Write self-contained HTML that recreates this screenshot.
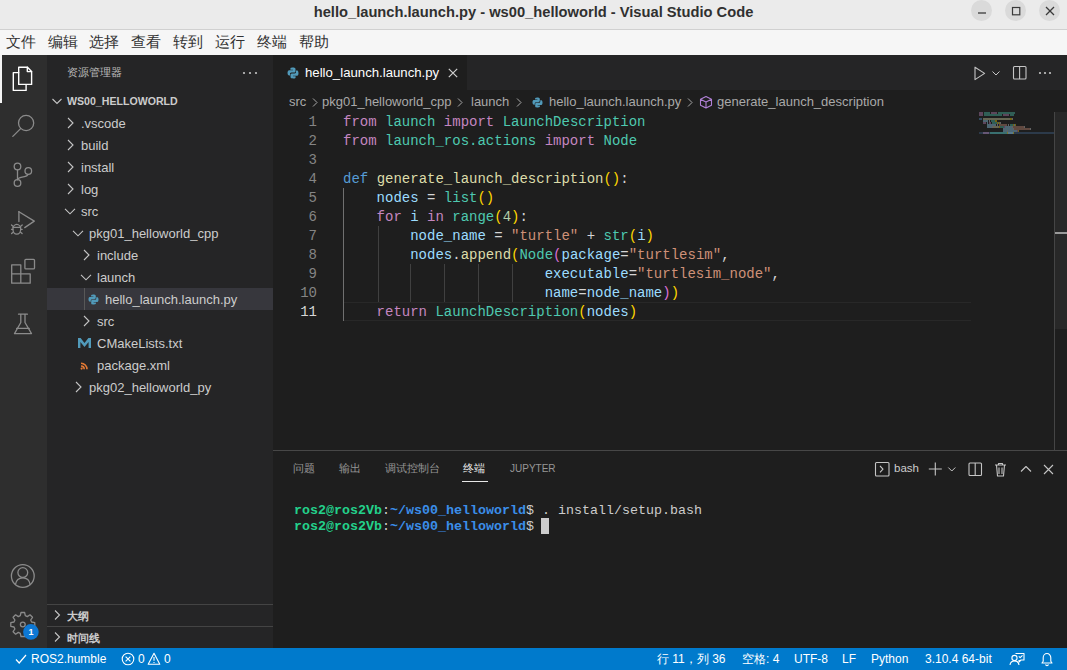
<!DOCTYPE html>
<html><head><meta charset="utf-8">
<style>
*{margin:0;padding:0;box-sizing:border-box}
html,body{width:1067px;height:670px;overflow:hidden;background:#1e1e1e;font-family:"Liberation Sans",sans-serif}
div,span,svg{position:absolute}
svg{overflow:visible}
#title{left:0;top:0;width:1067px;height:30px;background:#ebebeb;border-bottom:1px solid #d0d0d0}
#title .t{left:0;top:0;width:1067px;text-align:center;font-weight:bold;font-size:14.7px;line-height:25px;color:#303030}
.wbtn{width:21px;height:21px;border-radius:11px;background:#dadada;top:0}
#menu{left:0;top:30px;width:1067px;height:25px;background:#f6f6f6}
#menu span{top:0;font-size:14.5px;line-height:25px;color:#333}
#act{left:0;top:55px;width:47px;height:593px;background:#2e2e2e}
#side{left:47px;top:55px;width:226px;height:593px;background:#252526}
#tabs{left:273px;top:55px;width:794px;height:35px;background:#252526}
#editor{left:273px;top:90px;width:794px;height:360px;background:#1e1e1e}
#panel{left:273px;top:450px;width:794px;height:198px;background:#1e1e1e;border-top:1px solid #474747}
#status{left:0;top:648px;width:1067px;height:22px;background:#007acc;color:#fff;font-size:12px}
#status span{top:0;line-height:22px;white-space:nowrap}
.row{left:0;width:226px;height:22px;line-height:22px;font-size:13px;color:#cccccc;white-space:nowrap}
.row span{top:1px}
.code{left:343px;width:630px;height:19px;padding-top:1px;font-family:"Liberation Mono",monospace;font-size:14px;line-height:19px;white-space:pre;color:#d4d4d4}
.ln{left:273px;width:44px;height:19px;padding-top:1px;text-align:right;font-family:"Liberation Mono",monospace;font-size:14px;line-height:19px;color:#858585}
.k{color:#c586c0}.f{color:#dcdcaa}.c{color:#4ec9b0}.v{color:#9cdcfe}.s{color:#ce9178}.n{color:#b5cea8}.d{color:#569cd6}.y{color:#ffd700}.p{color:#da70d6}.b{color:#179fff}
.code span{position:static}
.guide{width:1px;background:#404040}
.term{left:294px;height:16px;padding-top:1px;font-family:"Liberation Mono",monospace;font-size:13.33px;line-height:16px;white-space:pre;color:#cccccc}
.term span{position:static}
.tg{color:#23d18b;font-weight:bold}.tb{color:#3b8eea;font-weight:bold}
.ptab{top:0;font-size:11px;line-height:35px;color:#969696;white-space:nowrap}
</style></head><body>
<!-- title bar -->
<div id="title"><div class="t">hello_launch.launch.py - ws00_helloworld - Visual Studio Code</div>
<div class="wbtn" style="left:971px"></div>
<div class="wbtn" style="left:1005px"></div>
<div class="wbtn" style="left:1039px"></div>
<svg style="left:0;top:0" width="1067" height="30"><g stroke="#3a3a3a" stroke-width="1" fill="none">
<line x1="978" y1="13" x2="986" y2="13" stroke-width="1.3"/>
<rect x="1012.5" y="7.5" width="7.3" height="7.3" stroke-width="1.2"/>
<line x1="1046" y1="7" x2="1054" y2="15" stroke-width="1.2"/><line x1="1054" y1="7" x2="1046" y2="15" stroke-width="1.2"/>
</g></svg>
</div>
<!-- menu -->
<div id="menu">
<span style="left:6px">文件</span><span style="left:48px">编辑</span><span style="left:89px">选择</span><span style="left:131px">查看</span><span style="left:173px">转到</span><span style="left:215px">运行</span><span style="left:257px">终端</span><span style="left:299px">帮助</span>
</div>
<!-- activity bar -->
<div id="act">
<div style="left:0;top:0;width:1.5px;height:48px;background:#f4f4f4"></div>
<svg style="left:0;top:0" width="47" height="593" fill="none" stroke-linecap="round" stroke-linejoin="round">
<!-- explorer -->
<g stroke="#ffffff" stroke-width="1.4">
<path d="M18.7 18.3V12.3H27.5L31.6 16.4V29.4H18.7V18.3"/>
<path d="M27.3 12.3V16.6H31.6"/>
<path d="M18.7 17.6H13.3V35.4H26.1V29.6"/>
</g>
<g stroke="#8b8b8b" stroke-width="1.3">
<!-- search -->
<circle cx="26.1" cy="68" r="7.6"/>
<line x1="20.6" y1="73.6" x2="12.8" y2="81.4"/>
<!-- scm -->
<circle cx="17.5" cy="111.5" r="3.3"/>
<circle cx="17.5" cy="128" r="3.3"/>
<circle cx="28.3" cy="116" r="3.3"/>
<path d="M17.5 114.8V124.7"/>
<path d="M28 119.3C28 123 18.5 120.5 17.5 124.7"/>
<!-- debug -->
<path d="M18.9 156.7V166.5"/>
<path d="M18.9 156.7L34.3 166.1L24.7 172.6"/>
<ellipse cx="16.8" cy="174.3" rx="3.9" ry="4.9"/>
<path d="M12.9 172.3H20.7M11.5 170L13 171.3M22.2 170L20.7 171.3M11.5 174.3H12.9M20.7 174.3H22.2M11.6 178.6L13.1 177.3M22.1 178.6L20.6 177.3"/>
<!-- extensions -->
<path d="M11.7 209.8H20.8V218.9H11.7Z M11.7 218.9H20.8V228.2H11.7Z M20.8 218.9H30.2V228.2H20.8Z"/>
<rect x="24.9" y="204.3" width="9.6" height="9.6" rx="1"/>
<!-- testing -->
<path d="M18.5 259.2H27.4M20.8 259.2V267.5L14.5 278.6H31.5L25 267.5V259.2"/>
<path d="M16.6 273.4H29.2"/>
<!-- accounts -->
<circle cx="22.8" cy="521" r="11.4"/>
<circle cx="22.8" cy="517.6" r="4.9"/>
<path d="M15.4 529.7C16.2 525 19.5 522.9 22.8 522.9C26.1 522.9 29.4 525 30.2 529.7"/>
<!-- gear -->
<path d="M21 557.5H24.6L25.3 560.7L27.3 561.6L30 559.8L32.5 562.3L30.7 565L31.6 567L34.8 567.7V571.3L31.6 572L30.7 574L32.5 576.7L30 579.2L27.3 577.4L25.3 578.3L24.6 581.5H21L20.3 578.3L18.3 577.4L15.6 579.2L13.1 576.7L14.9 574L14 572L10.8 571.3V567.7L14 567L14.9 565L13.1 562.3L15.6 559.8L18.3 561.6L20.3 560.7Z"/>
<circle cx="22.8" cy="569.5" r="2.4"/>
</g>
<circle cx="30.9" cy="576.9" r="7.8" fill="#0e78d4"/>
<text x="30.9" y="580.3" fill="#fff" font-size="9" font-weight="bold" text-anchor="middle" font-family="Liberation Sans" stroke="none">1</text>
</svg>
</div>
<!-- sidebar -->
<div id="side">
<span style="left:20px;top:0;line-height:35px;font-size:11px;color:#bbbbbb">资源管理器</span>
<svg style="left:195px;top:16px" width="16" height="4"><g fill="#c5c5c5"><circle cx="2" cy="2" r="1.1"/><circle cx="8" cy="2" r="1.1"/><circle cx="14" cy="2" r="1.1"/></g></svg>
<div class="row" style="top:35px;font-weight:bold;font-size:10.6px">
<svg style="left:2px;top:3px" width="16" height="16" fill="none" stroke="#c5c5c5" stroke-width="1.1"><path d="M3.5 6L8 10.5L12.5 6"/></svg>
<span style="left:20px;top:0">WS00_HELLOWORLD</span></div>
<div style="left:0;top:233px;width:226px;height:22px;background:#37373d"></div>
<div style="left:37px;top:233px;width:1px;height:22px;background:#585858"></div>
<div id="tree">
<div class="row" style="top:57px"><svg style="left:15px;top:3px" width="16" height="16" fill="none" stroke="#c5c5c5" stroke-width="1.1"><path d="M6 3L11 8L6 13"/></svg><span style="left:34px">.vscode</span></div>
<div class="row" style="top:79px"><svg style="left:15px;top:3px" width="16" height="16" fill="none" stroke="#c5c5c5" stroke-width="1.1"><path d="M6 3L11 8L6 13"/></svg><span style="left:34px">build</span></div>
<div class="row" style="top:101px"><svg style="left:15px;top:3px" width="16" height="16" fill="none" stroke="#c5c5c5" stroke-width="1.1"><path d="M6 3L11 8L6 13"/></svg><span style="left:34px">install</span></div>
<div class="row" style="top:123px"><svg style="left:15px;top:3px" width="16" height="16" fill="none" stroke="#c5c5c5" stroke-width="1.1"><path d="M6 3L11 8L6 13"/></svg><span style="left:34px">log</span></div>
<div class="row" style="top:145px"><svg style="left:15px;top:3px" width="16" height="16" fill="none" stroke="#c5c5c5" stroke-width="1.1"><path d="M3 5.8L8 10.8L13 5.8"/></svg><span style="left:34px">src</span></div>
<div class="row" style="top:167px"><svg style="left:23px;top:3px" width="16" height="16" fill="none" stroke="#c5c5c5" stroke-width="1.1"><path d="M3 5.8L8 10.8L13 5.8"/></svg><span style="left:42px">pkg01_helloworld_cpp</span></div>
<div class="row" style="top:189px"><svg style="left:31px;top:3px" width="16" height="16" fill="none" stroke="#c5c5c5" stroke-width="1.1"><path d="M6 3L11 8L6 13"/></svg><span style="left:50px">include</span></div>
<div class="row" style="top:211px"><svg style="left:31px;top:3px" width="16" height="16" fill="none" stroke="#c5c5c5" stroke-width="1.1"><path d="M3 5.8L8 10.8L13 5.8"/></svg><span style="left:50px">launch</span></div>
<div class="row" style="top:233px"><svg style="left:41px;top:6px" width="11" height="11" viewBox="0 0 12 12"><path d="M5.8 0.5C3.2 0.5 3.4 1.6 3.4 1.6V2.8H5.9V3.2H2.3C2.3 3.2 0.5 3 0.5 5.8C0.5 8.5 2 8.4 2 8.4H3V7.1C3 7.1 2.9 5.6 4.5 5.6H7C7 5.6 8.5 5.6 8.5 4.2V1.9C8.5 1.9 8.7 0.5 5.8 0.5Z" fill="#519aba"/><path d="M6.2 11.5C8.8 11.5 8.6 10.4 8.6 10.4V9.2H6.1V8.8H9.7C9.7 8.8 11.5 9 11.5 6.2C11.5 3.5 10 3.6 10 3.6H9V4.9C9 4.9 9.1 6.4 7.5 6.4H5C5 6.4 3.5 6.4 3.5 7.8V10.1C3.5 10.1 3.3 11.5 6.2 11.5Z" fill="#519aba"/></svg><span style="left:58px">hello_launch.launch.py</span></div>
<div class="row" style="top:255px"><svg style="left:31px;top:3px" width="16" height="16" fill="none" stroke="#c5c5c5" stroke-width="1.1"><path d="M6 3L11 8L6 13"/></svg><span style="left:50px">src</span></div>
<div class="row" style="top:277px"><svg style="left:31px;top:6px" width="13" height="10"><path d="M0 10V0H2.6L6.5 5L10.4 0H13V10H10.6V4L6.5 9L2.4 4V10Z" fill="#519aba"/></svg><span style="left:50px">CMakeLists.txt</span></div>
<div class="row" style="top:299px"><svg style="left:33px;top:7px" width="9" height="9" fill="none" stroke="#e37933" stroke-width="1.6"><path d="M1 2.2A6 6 0 0 1 7 8.2M1 5A3.2 3.2 0 0 1 4.2 8.2"/><circle cx="1.6" cy="7.6" r="1.1" fill="#e37933" stroke="none"/></svg><span style="left:50px">package.xml</span></div>
<div class="row" style="top:321px"><svg style="left:23px;top:3px" width="16" height="16" fill="none" stroke="#c5c5c5" stroke-width="1.1"><path d="M6 3L11 8L6 13"/></svg><span style="left:42px">pkg02_helloworld_py</span></div>
</div>
<div style="left:0;top:549px;width:226px;height:1px;background:#444"></div>
<div style="left:0;top:571px;width:226px;height:1px;background:#444"></div>
<div class="row" style="top:549px;font-weight:bold;font-size:11px">
<svg style="left:2px;top:3px" width="16" height="16" fill="none" stroke="#c5c5c5" stroke-width="1.1"><path d="M6 3.5L10.5 8L6 12.5"/></svg>
<span style="left:20px">大纲</span></div>
<div class="row" style="top:571px;font-weight:bold;font-size:11px">
<svg style="left:2px;top:3px" width="16" height="16" fill="none" stroke="#c5c5c5" stroke-width="1.1"><path d="M6 3.5L10.5 8L6 12.5"/></svg>
<span style="left:20px">时间线</span></div>
</div>
<!-- tabs -->
<div id="tabs">
<div style="left:0;top:0;width:194px;height:35px;background:#1e1e1e"></div>
<svg style="left:14px;top:11.5px" width="12" height="12" viewBox="0 0 12 12"><path d="M5.8 0.5C3.2 0.5 3.4 1.6 3.4 1.6V2.8H5.9V3.2H2.3C2.3 3.2 0.5 3 0.5 5.8C0.5 8.5 2 8.4 2 8.4H3V7.1C3 7.1 2.9 5.6 4.5 5.6H7C7 5.6 8.5 5.6 8.5 4.2V1.9C8.5 1.9 8.7 0.5 5.8 0.5Z" fill="#519aba"/><path d="M6.2 11.5C8.8 11.5 8.6 10.4 8.6 10.4V9.2H6.1V8.8H9.7C9.7 8.8 11.5 9 11.5 6.2C11.5 3.5 10 3.6 10 3.6H9V4.9C9 4.9 9.1 6.4 7.5 6.4H5C5 6.4 3.5 6.4 3.5 7.8V10.1C3.5 10.1 3.3 11.5 6.2 11.5Z" fill="#519aba"/></svg>
<span style="left:32px;top:-0.5px;line-height:35px;font-size:13.2px;color:#ffffff;white-space:nowrap">hello_launch.launch.py</span>
<svg style="left:175px;top:13px" width="10" height="10" fill="none" stroke="#d0d0d0" stroke-width="1.2"><path d="M0.8 0.8L9.2 9.2M9.2 0.8L0.8 9.2"/></svg>
<svg style="left:700px;top:10px" width="90" height="16" fill="none" stroke="#c5c5c5" stroke-width="1.1" stroke-linejoin="round">
<path d="M2 2.2V14.6L11.6 8.4Z"/>
<path d="M19.5 6.5L23 10L26.5 6.5" stroke-width="1"/>
<rect x="40.5" y="1.5" width="12.5" height="12.5" rx="1"/>
<path d="M46.6 1.5V14"/>
<g fill="#c5c5c5" stroke="none"><circle cx="67" cy="8" r="1.1"/><circle cx="72" cy="8" r="1.1"/><circle cx="77" cy="8" r="1.1"/></g>
</svg>
</div>
<!-- editor -->
<div id="editor">
<div style="left:0;top:1px;width:794px;height:22px;font-size:13px;color:#a9a9a9;white-space:nowrap;line-height:22px" id="bc"><span style="left:16px;top:0">src</span><svg style="left:35px;top:4px" width="14" height="14" fill="none" stroke="#a9a9a9" stroke-width="1"><path d="M5 3.5L9 7.5L5 11.5"/></svg><span style="left:49px;top:0">pkg01_helloworld_cpp</span><svg style="left:180px;top:4px" width="14" height="14" fill="none" stroke="#a9a9a9" stroke-width="1"><path d="M5 3.5L9 7.5L5 11.5"/></svg><span style="left:198px;top:0">launch</span><svg style="left:239px;top:4px" width="14" height="14" fill="none" stroke="#a9a9a9" stroke-width="1"><path d="M5 3.5L9 7.5L5 11.5"/></svg><svg style="left:259px;top:6px" width="11" height="11" viewBox="0 0 12 12"><path d="M5.8 0.5C3.2 0.5 3.4 1.6 3.4 1.6V2.8H5.9V3.2H2.3C2.3 3.2 0.5 3 0.5 5.8C0.5 8.5 2 8.4 2 8.4H3V7.1C3 7.1 2.9 5.6 4.5 5.6H7C7 5.6 8.5 5.6 8.5 4.2V1.9C8.5 1.9 8.7 0.5 5.8 0.5Z" fill="#519aba"/><path d="M6.2 11.5C8.8 11.5 8.6 10.4 8.6 10.4V9.2H6.1V8.8H9.7C9.7 8.8 11.5 9 11.5 6.2C11.5 3.5 10 3.6 10 3.6H9V4.9C9 4.9 9.1 6.4 7.5 6.4H5C5 6.4 3.5 6.4 3.5 7.8V10.1C3.5 10.1 3.3 11.5 6.2 11.5Z" fill="#519aba"/></svg><span style="left:276px;top:0">hello_launch.launch.py</span><svg style="left:410px;top:4px" width="14" height="14" fill="none" stroke="#a9a9a9" stroke-width="1"><path d="M5 3.5L9 7.5L5 11.5"/></svg><svg style="left:426px;top:4px" width="14" height="14" fill="none" stroke="#b180d7" stroke-width="1.1" stroke-linejoin="round"><path d="M7 1.5L12.5 4.3V10.2L7 13L1.5 10.2V4.3Z M1.5 4.3L7 7.1L12.5 4.3 M7 7.1V13"/></svg><span style="left:444px;top:0">generate_launch_description</span></div>
</div>
<div id="code">
<div style="left:343px;top:302px;width:628px;height:19px;border:1px solid #282828;border-right:none"></div>
<div class="ln" style="top:112px;color:#858585">1</div>
<div class="code" style="top:112px"><span class="k">from</span> <span class="c">launch</span> <span class="k">import</span> <span class="c">LaunchDescription</span></div>
<div class="ln" style="top:131px;color:#858585">2</div>
<div class="code" style="top:131px"><span class="k">from</span> <span class="c">launch_ros.actions</span> <span class="k">import</span> <span class="c">Node</span></div>
<div class="ln" style="top:150px;color:#858585">3</div>
<div class="code" style="top:150px"></div>
<div class="ln" style="top:169px;color:#858585">4</div>
<div class="code" style="top:169px"><span class="d">def</span> <span class="f">generate_launch_description</span><span class="y">()</span>:</div>
<div class="ln" style="top:188px;color:#858585">5</div>
<div class="code" style="top:188px">    <span class="v">nodes</span> = <span class="c">list</span><span class="y">()</span></div>
<div class="ln" style="top:207px;color:#858585">6</div>
<div class="code" style="top:207px">    <span class="k">for</span> <span class="v">i</span> <span class="k">in</span> <span class="c">range</span><span class="y">(</span><span class="n">4</span><span class="y">)</span>:</div>
<div class="ln" style="top:226px;color:#858585">7</div>
<div class="code" style="top:226px">        <span class="v">node_name</span> = <span class="s">"turtle"</span> + <span class="c">str</span><span class="y">(</span><span class="v">i</span><span class="y">)</span></div>
<div class="ln" style="top:245px;color:#858585">8</div>
<div class="code" style="top:245px">        <span class="v">nodes</span>.<span class="f">append</span><span class="y">(</span><span class="c">Node</span><span class="p">(</span><span class="v">package</span>=<span class="s">"turtlesim"</span>,</div>
<div class="ln" style="top:264px;color:#858585">9</div>
<div class="code" style="top:264px">                        <span class="v">executable</span>=<span class="s">"turtlesim_node"</span>,</div>
<div class="ln" style="top:283px;color:#858585">10</div>
<div class="code" style="top:283px">                        <span class="v">name</span>=<span class="v">node_name</span><span class="p">)</span><span class="y">)</span></div>
<div class="ln" style="top:302px;color:#d6d6d6">11</div>
<div class="code" style="top:302px">    <span class="k">return</span> <span class="c">LaunchDescription</span><span class="y">(</span><span class="v">nodes</span><span class="y">)</span></div>
<div class="guide" style="left:343px;top:188px;height:133px;background:#707070"></div>
<div class="guide" style="left:378px;top:226px;height:76px"></div>
<div class="guide" style="left:410px;top:264px;height:38px"></div>
<div class="guide" style="left:444px;top:264px;height:38px"></div>
<div class="guide" style="left:478px;top:264px;height:38px"></div>
<div class="guide" style="left:512px;top:264px;height:38px"></div>
</div>
<div id="minimap">
<div style="left:979px;top:132px;width:75px;height:2px;background:#2c3a4a"></div>
<div style="left:979px;top:112px;width:4px;height:2px;background:#c586c0;opacity:.38"></div>
<div style="left:984px;top:112px;width:6px;height:2px;background:#4ec9b0;opacity:.38"></div>
<div style="left:991px;top:112px;width:6px;height:2px;background:#c586c0;opacity:.38"></div>
<div style="left:998px;top:112px;width:17px;height:2px;background:#4ec9b0;opacity:.38"></div>
<div style="left:979px;top:114px;width:4px;height:2px;background:#c586c0;opacity:.38"></div>
<div style="left:984px;top:114px;width:18px;height:2px;background:#4ec9b0;opacity:.38"></div>
<div style="left:1003px;top:114px;width:6px;height:2px;background:#c586c0;opacity:.38"></div>
<div style="left:1010px;top:114px;width:4px;height:2px;background:#4ec9b0;opacity:.38"></div>
<div style="left:979px;top:118px;width:3px;height:2px;background:#569cd6;opacity:.38"></div>
<div style="left:983px;top:118px;width:27px;height:2px;background:#dcdcaa;opacity:.38"></div>
<div style="left:1010px;top:118px;width:2px;height:2px;background:#ffd700;opacity:.38"></div>
<div style="left:1012px;top:118px;width:1px;height:2px;background:#d4d4d4;opacity:.38"></div>
<div style="left:983px;top:120px;width:5px;height:2px;background:#9cdcfe;opacity:.38"></div>
<div style="left:989px;top:120px;width:1px;height:2px;background:#d4d4d4;opacity:.38"></div>
<div style="left:991px;top:120px;width:4px;height:2px;background:#4ec9b0;opacity:.38"></div>
<div style="left:995px;top:120px;width:2px;height:2px;background:#ffd700;opacity:.38"></div>
<div style="left:983px;top:122px;width:3px;height:2px;background:#c586c0;opacity:.38"></div>
<div style="left:987px;top:122px;width:1px;height:2px;background:#9cdcfe;opacity:.38"></div>
<div style="left:989px;top:122px;width:2px;height:2px;background:#c586c0;opacity:.38"></div>
<div style="left:992px;top:122px;width:5px;height:2px;background:#4ec9b0;opacity:.38"></div>
<div style="left:997px;top:122px;width:1px;height:2px;background:#ffd700;opacity:.38"></div>
<div style="left:998px;top:122px;width:1px;height:2px;background:#b5cea8;opacity:.38"></div>
<div style="left:999px;top:122px;width:1px;height:2px;background:#ffd700;opacity:.38"></div>
<div style="left:1000px;top:122px;width:1px;height:2px;background:#d4d4d4;opacity:.38"></div>
<div style="left:987px;top:124px;width:9px;height:2px;background:#9cdcfe;opacity:.38"></div>
<div style="left:997px;top:124px;width:1px;height:2px;background:#d4d4d4;opacity:.38"></div>
<div style="left:999px;top:124px;width:8px;height:2px;background:#ce9178;opacity:.38"></div>
<div style="left:1008px;top:124px;width:1px;height:2px;background:#d4d4d4;opacity:.38"></div>
<div style="left:1010px;top:124px;width:3px;height:2px;background:#4ec9b0;opacity:.38"></div>
<div style="left:1013px;top:124px;width:1px;height:2px;background:#ffd700;opacity:.38"></div>
<div style="left:1014px;top:124px;width:1px;height:2px;background:#9cdcfe;opacity:.38"></div>
<div style="left:1015px;top:124px;width:1px;height:2px;background:#ffd700;opacity:.38"></div>
<div style="left:987px;top:126px;width:5px;height:2px;background:#9cdcfe;opacity:.38"></div>
<div style="left:992px;top:126px;width:1px;height:2px;background:#d4d4d4;opacity:.38"></div>
<div style="left:993px;top:126px;width:6px;height:2px;background:#dcdcaa;opacity:.38"></div>
<div style="left:999px;top:126px;width:1px;height:2px;background:#ffd700;opacity:.38"></div>
<div style="left:1000px;top:126px;width:4px;height:2px;background:#4ec9b0;opacity:.38"></div>
<div style="left:1004px;top:126px;width:1px;height:2px;background:#da70d6;opacity:.38"></div>
<div style="left:1005px;top:126px;width:7px;height:2px;background:#9cdcfe;opacity:.38"></div>
<div style="left:1012px;top:126px;width:1px;height:2px;background:#d4d4d4;opacity:.38"></div>
<div style="left:1013px;top:126px;width:11px;height:2px;background:#ce9178;opacity:.38"></div>
<div style="left:1024px;top:126px;width:1px;height:2px;background:#d4d4d4;opacity:.38"></div>
<div style="left:1003px;top:128px;width:10px;height:2px;background:#9cdcfe;opacity:.38"></div>
<div style="left:1013px;top:128px;width:1px;height:2px;background:#d4d4d4;opacity:.38"></div>
<div style="left:1014px;top:128px;width:16px;height:2px;background:#ce9178;opacity:.38"></div>
<div style="left:1030px;top:128px;width:1px;height:2px;background:#d4d4d4;opacity:.38"></div>
<div style="left:1003px;top:130px;width:4px;height:2px;background:#9cdcfe;opacity:.38"></div>
<div style="left:1007px;top:130px;width:1px;height:2px;background:#d4d4d4;opacity:.38"></div>
<div style="left:1008px;top:130px;width:9px;height:2px;background:#9cdcfe;opacity:.38"></div>
<div style="left:1017px;top:130px;width:1px;height:2px;background:#da70d6;opacity:.38"></div>
<div style="left:1018px;top:130px;width:1px;height:2px;background:#ffd700;opacity:.38"></div>
<div style="left:983px;top:132px;width:6px;height:2px;background:#c586c0;opacity:.38"></div>
<div style="left:990px;top:132px;width:17px;height:2px;background:#4ec9b0;opacity:.38"></div>
<div style="left:1007px;top:132px;width:1px;height:2px;background:#ffd700;opacity:.38"></div>
<div style="left:1008px;top:132px;width:5px;height:2px;background:#9cdcfe;opacity:.38"></div>
<div style="left:1013px;top:132px;width:1px;height:2px;background:#ffd700;opacity:.38"></div>
<div style="left:1054px;top:112px;width:1px;height:338px;background:#454545"></div><div style="left:1055px;top:112px;width:12px;height:217px;background:#282828"></div><div style="left:1055px;top:232px;width:12px;height:2px;background:#9a9a9a"></div>
</div>
<!-- panel -->
<div id="panel">
<span class="ptab" style="left:20px">问题</span>
<span class="ptab" style="left:66px">输出</span>
<span class="ptab" style="left:112px">调试控制台</span>
<span class="ptab" style="left:190px;color:#e7e7e7">终端</span>
<div style="left:189px;top:30px;width:26px;height:1px;background:#e7e7e7"></div>
<span class="ptab" style="left:237px;font-size:10px">JUPYTER</span>
<svg style="left:600px;top:10px" width="190" height="16" fill="none" stroke="#c5c5c5" stroke-width="1.1" stroke-linejoin="round">
<rect x="2.5" y="1.5" width="13.5" height="13.5" rx="1"/><path d="M7 5L10 8.2L7 11.4"/>
<path d="M62.3 1.5V14.5M55.8 8H68.8"/>
<path d="M75.3 6.5L78.8 10L82.3 6.5" stroke-width="1"/>
<rect x="96" y="2" width="12.5" height="12.5" rx="1"/><path d="M102.2 2V14.5"/>
<path d="M122 4H133M125.5 4V2.5H129.5V4M123.5 4L124.5 15H130.5L131.5 4M126 6.5V13M129 6.5V13"/>
<path d="M148 10.5L153 5.5L158 10.5"/>
<path d="M171 4L180 13M180 4L171 13"/>
</svg>
<span style="left:621px;top:0;line-height:35px;font-size:11.5px;color:#cccccc">bash</span>
</div>
<div id="term"><div class="term" style="top:502px"><span class="tg">ros2@ros2Vb</span>:<span class="tb">~/ws00_helloworld</span>$ . install/setup.bash</div><div class="term" style="top:518px"><span class="tg">ros2@ros2Vb</span>:<span class="tb">~/ws00_helloworld</span>$ </div><div style="left:541px;top:518px;width:8px;height:16px;background:#cccccc"></div></div>
<!-- status -->
<div id="status">
<svg style="left:15px;top:5px" width="12" height="12" fill="none" stroke="#fff" stroke-width="1.2"><path d="M1 6.5L4.2 10L11 2"/></svg>
<span style="left:31px">ROS2.humble</span>
<svg style="left:121px;top:4px" width="14" height="14" fill="none" stroke="#fff" stroke-width="1.1"><circle cx="7" cy="7" r="5.8"/><path d="M4.6 4.6L9.4 9.4M9.4 4.6L4.6 9.4"/></svg>
<span style="left:138px">0</span>
<svg style="left:147px;top:4px" width="14" height="14" fill="none" stroke="#fff" stroke-width="1.1" stroke-linejoin="round"><path d="M7 1.2L12.8 12.3H1.2Z"/><path d="M7 5V8.8M7 10V11"/></svg>
<span style="left:164px">0</span>
<span style="left:657px">行 11，列 36</span>
<span style="left:742px">空格: 4</span>
<span style="left:794px">UTF-8</span>
<span style="left:842px">LF</span>
<span style="left:871px">Python</span>
<span style="left:925px">3.10.4 64-bit</span>
<svg style="left:1009px;top:4px" width="16" height="14" fill="none" stroke="#fff" stroke-width="1.1" stroke-linejoin="round"><circle cx="5.5" cy="6" r="2.6"/><path d="M1 13C1.3 10.4 3.2 9 5.5 9C7.8 9 9.7 10.4 10 13"/><path d="M6.5 1.5H15V8H12L10 10V8"/><path d="M9.8 4.3L11.2 5.7L13.5 3.3"/></svg>
<svg style="left:1040px;top:4px" width="14" height="14" fill="none" stroke="#fff" stroke-width="1.1" stroke-linejoin="round"><path d="M2 11H12L10.8 9.3V5.8C10.8 3.5 9.2 1.5 7 1.5C4.8 1.5 3.2 3.5 3.2 5.8V9.3Z"/><path d="M5.5 12.5C5.8 13.3 6.4 13.6 7 13.6C7.6 13.6 8.2 13.3 8.5 12.5"/></svg>
</div>
</body></html>
